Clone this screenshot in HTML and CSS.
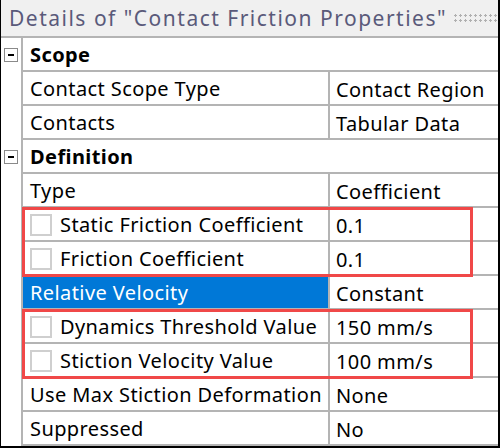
FILE: index.html
```html
<!DOCTYPE html>
<html lang="en">
<head>
    <meta charset="UTF-8">
    <meta name="viewport" content="width=device-width, initial-scale=1.0">
    <title>Details of "Contact Friction Properties"</title>
    <link rel="stylesheet" href="styles.css">
</head>
<body>

    <div class="panel">
        <div class="title">
            <span class="title-text">Details of "Contact Friction Properties"</span>
            <span class="grip"></span>
        </div>

        <div class="grid">
            <div class="row section">
                <div class="gutter"><span class="toggle"></span></div>
                <div class="name">Scope</div>
            </div>
            <div class="row">
                <div class="gutter"></div>
                <div class="name">Contact Scope Type</div>
                <div class="value">Contact Region</div>
            </div>
            <div class="row">
                <div class="gutter"></div>
                <div class="name">Contacts</div>
                <div class="value">Tabular Data</div>
            </div>

            <div class="row section">
                <div class="gutter"><span class="toggle"></span></div>
                <div class="name">Definition</div>
            </div>
            <div class="row">
                <div class="gutter"></div>
                <div class="name">Type</div>
                <div class="value">Coefficient</div>
            </div>

            <!-- highlighted group 1 -->
            <div class="group">
                <div class="row">
                    <div class="gutter"></div>
                    <div class="name"><span class="check"></span>Static Friction Coefficient</div>
                    <div class="value">0.1</div>
                </div>
                <div class="row">
                    <div class="gutter"></div>
                    <div class="name"><span class="check"></span>Friction Coefficient</div>
                    <div class="value">0.1</div>
                </div>
            </div>

            <div class="row">
                <div class="gutter"></div>
                <div class="name selected">Relative Velocity</div>
                <div class="value">Constant</div>
            </div>

            <!-- highlighted group 2 -->
            <div class="group">
                <div class="row">
                    <div class="gutter"></div>
                    <div class="name"><span class="check"></span>Dynamics Threshold Value</div>
                    <div class="value">150 mm/s</div>
                </div>
                <div class="row">
                    <div class="gutter"></div>
                    <div class="name"><span class="check"></span>Stiction Velocity Value</div>
                    <div class="value">100 mm/s</div>
                </div>
            </div>

            <div class="row">
                <div class="gutter"></div>
                <div class="name">Use Max Stiction Deformation</div>
                <div class="value">None</div>
            </div>
            <div class="row">
                <div class="gutter"></div>
                <div class="name">Suppressed</div>
                <div class="value">No</div>
            </div>
        </div>
    </div>

</body>
</html>
```

FILE: styles.css
```css
* {
    margin: 0;
    padding: 0;
    box-sizing: border-box;
}

body {
    font-family: "Noto Sans", "Open Sans", sans-serif;
    background-color: white;
    color: black;
}

.panel {
    width: 500px;
    height: 448px;
    border-left: 1px solid black;
    border-right: 2px solid black;
    border-bottom: 2px solid black;
    overflow: hidden;
}

.title {
    height: 38px;
    background: #f0f0f0;
    border-bottom: 2px solid #b4b4b4;
    display: flex;
    align-items: center;
    padding-left: 8px;
}

.title-text {
    font-size: 21px;
    letter-spacing: 1.5px;
    color: #5a5a7a;
    white-space: nowrap;
}

.grip {
    flex: 1;
    height: 10px;
    margin-left: 6px;
    background-image: radial-gradient(circle, #b0b0b0 1px, transparent 1.3px);
    background-size: 5px 5px;
}

.row {
    display: flex;
    height: 34px;
    font-size: 20px;
    letter-spacing: 0.4px;
    line-height: 33px;
}

.gutter {
    width: 22px;
    flex-shrink: 0;
    border-right: 2px solid #b4b4b4;
    display: flex;
    align-items: center;
    justify-content: center;
}

.toggle {
    width: 14px;
    height: 14px;
    border: 1px solid #8a8a8a;
    position: relative;
    margin-left: -1px;
}

.toggle::after {
    content: "";
    position: absolute;
    left: 3px;
    top: 5px;
    width: 6px;
    height: 2px;
    background: black;
}

.name {
    width: 307px;
    flex-shrink: 0;
    padding-left: 7px;
    padding-top: 1px;
    border-right: 2px solid #b4b4b4;
    border-bottom: 2px solid #b4b4b4;
    white-space: nowrap;
    display: flex;
    align-items: center;
}

.value {
    flex: 1;
    padding-left: 6px;
    padding-top: 1px;
    border-bottom: 2px solid #b4b4b4;
    white-space: nowrap;
}

.section .name {
    flex: 1;
    border-right: none;
    font-weight: bold;
}

.name.selected {
    background: #0078d7;
    color: white;
}

.check {
    width: 22px;
    height: 22px;
    border: 2px solid #cfcfcf;
    margin-right: 8px;
    flex-shrink: 0;
}

.group {
    position: relative;
}

.group::after {
    content: "";
    position: absolute;
    left: 21px;
    top: -1px;
    width: 445px;
    bottom: -1px;
    border: 3px solid #f04848;
    pointer-events: none;
}
```
